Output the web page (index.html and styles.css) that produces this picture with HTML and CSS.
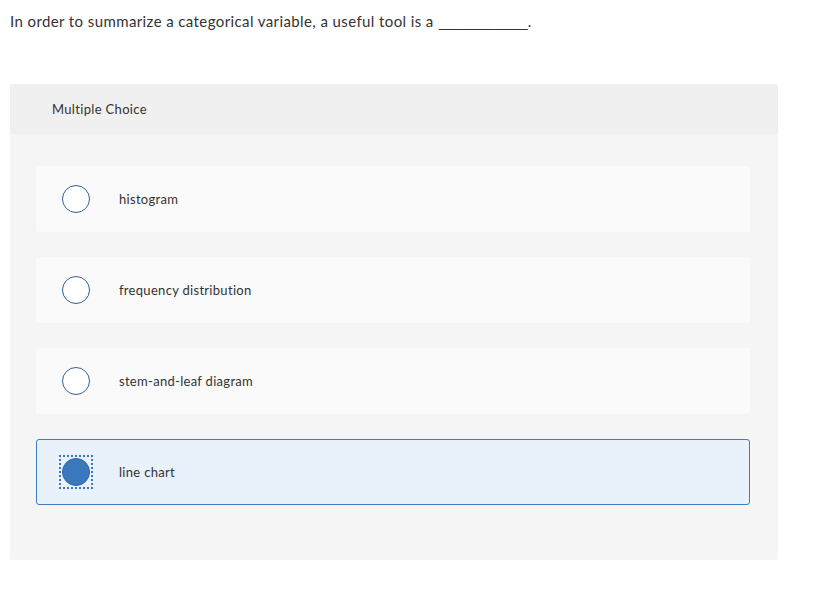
FILE: index.html
```html
<!DOCTYPE html>
<html lang="en">
<head>
<meta charset="utf-8">
<title>Multiple Choice</title>
<link rel="stylesheet" href="styles.css">
</head>
<body>
<p class="question">In order to summarize a categorical variable, a useful tool is a <span class="blank">___________</span>.</p>
<section class="mc">
  <header class="mc-head">Multiple Choice</header>
  <div class="mc-body">
    <label class="opt"><span class="radio"></span><span class="opt-text">histogram</span></label>
    <label class="opt"><span class="radio"></span><span class="opt-text">frequency distribution</span></label>
    <label class="opt"><span class="radio"></span><span class="opt-text">stem-and-leaf diagram</span></label>
    <label class="opt selected"><span class="focus"><span class="radio"></span></span><span class="opt-text">line chart</span></label>
  </div>
</section>
</body>
</html>
```
FILE: styles.css
```css
* { box-sizing: border-box; }
body {
  margin: 0;
  padding: 11px 10px 0 10px;
  font-family: Lato, "Open Sans", "Liberation Sans", sans-serif;
  color: #333;
  background: #fff;
}
.question {
  margin: 0;
  font-size: 15px;
  line-height: 20px;
  letter-spacing: 0.4px;
  color: #333;
}
.blank {
  font-family: "Liberation Sans", Arial, sans-serif;
  font-size: 14.5px;
  line-height: 1;
  letter-spacing: 0;
  margin-left: 1px;
}
.mc {
  margin-top: 53px;
  width: 768px;
  background: #f5f5f5;
  border-radius: 3px;
  overflow: hidden;
}
.mc-head {
  height: 50px;
  background: #f0f0f0;
  padding-left: 42px;
  display: flex;
  align-items: center;
  font-size: 13px;
  letter-spacing: 0.33px;
  color: #333;
}
.mc-body {
  padding: 32px 28px 55px 26px;
  display: flex;
  flex-direction: column;
  gap: 25px;
}
.opt {
  height: 66px;
  background: #fafafa;
  border-radius: 3px;
  display: flex;
  align-items: center;
  padding-left: 25px;
  border: 1px solid transparent;
}
.opt.selected {
  background: #e9f1fa;
  border-color: #3d7cc2;
}
.radio {
  width: 28px;
  height: 28px;
  border-radius: 50%;
  border: 1.5px solid #2f6196;
  background: #fff;
  flex: none;
}
.focus {
  width: 34px;
  height: 34px;
  margin-left: -3px;
  margin-right: -3px;
  border: 2px dotted #3a78c0;
  display: flex;
  align-items: center;
  justify-content: center;
  flex: none;
}
.selected .radio {
  background: #3b78bd;
  border-color: #2c63a0;
}
.opt-text {
  margin-left: 29px;
  font-size: 13px;
  letter-spacing: 0.3px;
  color: #333;
}
```
